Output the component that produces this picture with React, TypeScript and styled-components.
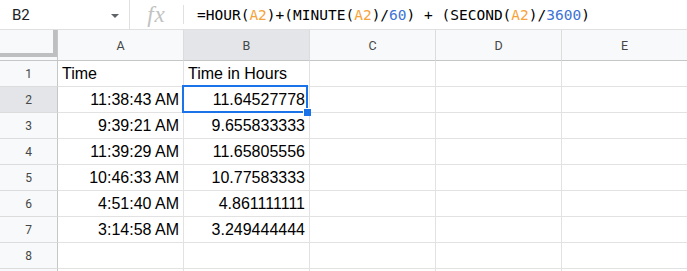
import { Fragment } from "react";
import styled, { createGlobalStyle } from "styled-components";

const GlobalStyle = createGlobalStyle`
  html, body {
    margin: 0;
    padding: 0;
    background: #ffffff;
    overflow: hidden;
  }
`;

const Page = styled.div`
  width: 687px;
  height: 271px;
  overflow: hidden;
  font-family: "Liberation Sans", Arial, sans-serif;
`;

const FormulaBar = styled.div`
  display: flex;
  align-items: stretch;
  height: 30px;
  box-sizing: border-box;
  border-bottom: 1px solid #e0e0e0;
`;

const NameBox = styled.div`
  display: flex;
  align-items: center;
  justify-content: space-between;
  width: 130px;
  box-sizing: border-box;
  padding: 0 10px 0 12px;
  border-right: 1px solid #e0e0e0;
  font-family: Roboto, "Liberation Sans", sans-serif;
  font-size: 15px;
  color: #202124;
`;

const Caret = styled.span`
  width: 0;
  height: 0;
  border-left: 4px solid transparent;
  border-right: 4px solid transparent;
  border-top: 4px solid #5f6368;
  margin-top: 2px;
`;

const FxBox = styled.div`
  display: flex;
  align-items: center;
  justify-content: center;
  width: 53px;
  margin: 5px 0;
  border-right: 1px solid #e0e0e0;
  font-family: "Liberation Serif", serif;
  font-style: italic;
  font-size: 23px;
  color: #c2c2c2;
  letter-spacing: 1px;
`;

const Formula = styled.div`
  display: flex;
  align-items: center;
  padding-left: 13px;
  font-family: "DejaVu Sans Mono", "Liberation Mono", monospace;
  font-size: 14.5px;
  color: #000000;
  white-space: pre;
`;

const Token = styled.span<{ $kind: "ref" | "num" }>`
  color: ${(p) => (p.$kind === "ref" ? "#f6a33b" : "#3d72d6")};
`;

const Grid = styled.div`
  display: grid;
  grid-template-columns: 58px repeat(5, 126px);
  grid-auto-rows: 26px;
  grid-template-rows: 31px;
`;

const ColHeader = styled.div<{ $active?: boolean }>`
  display: flex;
  align-items: center;
  justify-content: center;
  box-sizing: border-box;
  background: ${(p) => (p.$active ? "#e3e5e8" : "#f8f9fa")};
  border-right: 1px solid #dcdcdc;
  border-bottom: 1px solid #c4c7c5;
  font-family: Roboto, "Liberation Sans", sans-serif;
  font-size: 12.5px;
  color: #444746;
  padding-top: 1px;
`;

const Corner = styled.div`
  box-sizing: border-box;
  background: #f8f9fa;
  border-bottom: 1px solid #c4c7c5;
  border-right: 1px solid #c4c7c5;
`;

const FreezeBars = styled.div`
  box-sizing: border-box;
  width: 57px;
  height: 27px;
  border-right: 4px solid #bdbfc1;
  border-bottom: 4px solid #bdbfc1;
`;

const RowHeader = styled.div<{ $active?: boolean }>`
  display: flex;
  align-items: center;
  justify-content: center;
  box-sizing: border-box;
  background: ${(p) => (p.$active ? "#e3e5e8" : "#f8f9fa")};
  border-right: 1px solid #c4c7c5;
  border-bottom: 1px solid #dcdcdc;
  font-family: Roboto, "Liberation Sans", sans-serif;
  font-size: 12px;
  color: #444746;
`;

const Cell = styled.div<{ $align?: "left" | "right"; $selected?: boolean }>`
  position: relative;
  z-index: ${(p) => (p.$selected ? 2 : "auto")};
  display: flex;
  align-items: flex-end;
  justify-content: ${(p) => (p.$align === "right" ? "flex-end" : "flex-start")};
  box-sizing: border-box;
  padding: 0 4px 3px 4px;
  border-right: 1px solid #e2e2e2;
  border-bottom: 1px solid #e2e2e2;
  font-size: 16px;
  line-height: 19px;
  color: #000000;
  white-space: nowrap;
`;

const Selection = styled.div`
  position: absolute;
  left: -2px;
  top: -2px;
  right: 1px;
  bottom: -1px;
  border: 2px solid #1a73e8;
  pointer-events: none;
`;

const FillHandle = styled.div`
  position: absolute;
  right: -5px;
  bottom: -5px;
  width: 7px;
  height: 7px;
  background: #1a73e8;
  border-left: 1px solid #ffffff;
  border-top: 1px solid #ffffff;
`;

const rows: [string, string][] = [
  ["11:38:43 AM", "11.64527778"],
  ["9:39:21 AM", "9.655833333"],
  ["11:39:29 AM", "11.65805556"],
  ["10:46:33 AM", "10.77583333"],
  ["4:51:40 AM", "4.861111111"],
  ["3:14:58 AM", "3.249444444"],
];

const columns = ["A", "B", "C", "D", "E"];

const App = () => {
  return (
    <Page>
      <GlobalStyle />
      <FormulaBar>
        <NameBox>
          B2
          <Caret />
        </NameBox>
        <FxBox>fx</FxBox>
        <Formula>
          =HOUR(<Token $kind="ref">A2</Token>)+(MINUTE(<Token $kind="ref">A2</Token>)/
          <Token $kind="num">60</Token>) + (SECOND(<Token $kind="ref">A2</Token>)/
          <Token $kind="num">3600</Token>)
        </Formula>
      </FormulaBar>
      <Grid>
        <Corner>
          <FreezeBars />
        </Corner>
        {columns.map((c) => (
          <ColHeader key={c} $active={c === "B"}>
            {c}
          </ColHeader>
        ))}

        <RowHeader>1</RowHeader>
        <Cell>Time</Cell>
        <Cell>Time in Hours</Cell>
        <Cell />
        <Cell />
        <Cell />

        {rows.map(([time, hours], i) => (
          <Fragment key={i}>
            <RowHeader $active={i === 0}>{i + 2}</RowHeader>
            <Cell $align="right">{time}</Cell>
            <Cell $align="right" $selected={i === 0}>
              {hours}
              {i === 0 && (
                <Selection>
                  <FillHandle />
                </Selection>
              )}
            </Cell>
            <Cell />
            <Cell />
            <Cell />
          </Fragment>
        ))}

        <RowHeader>8</RowHeader>
        <Cell />
        <Cell />
        <Cell />
        <Cell />
        <Cell />
        <RowHeader />
        <Cell />
        <Cell />
        <Cell />
        <Cell />
        <Cell />
      </Grid>
    </Page>
  );
};

export default App;
